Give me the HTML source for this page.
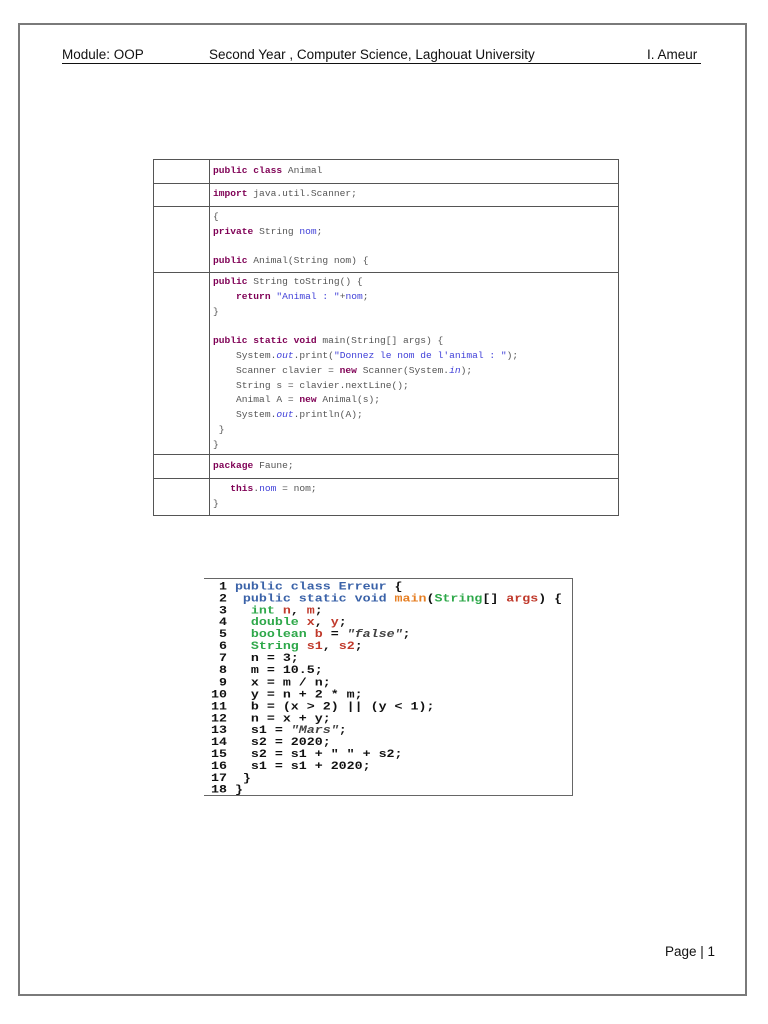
<!DOCTYPE html>
<html><head><meta charset="utf-8"><style>
body{margin:0;width:768px;height:1024px;background:#fff;position:relative;overflow:hidden;font-family:"Liberation Sans",sans-serif}
.frame{position:absolute;left:18px;top:23px;width:725px;height:969px;border:2px solid #7a7a7a}
.hdr{position:absolute;top:47px;font-size:13.5px;color:#111;white-space:nowrap}
.ul{position:absolute;left:62px;top:63px;width:639px;height:1px;background:#111}
.tline{position:absolute;left:153px;width:466px;height:1px;background:#555}
.vl{position:absolute;left:209px;top:159px;width:1px;height:357px;background:#555}
.c{position:absolute;left:213px;font-family:"Liberation Mono",monospace;font-size:9.6px;color:#555;white-space:pre;line-height:14.8px}
.k{color:#7f0055;font-weight:bold}
.b{color:#3f3fd8}
.i{color:#3f3fd8;font-style:italic}
.img{position:absolute;left:204px;top:578px;width:368px;height:216px;border-top:1px solid #666;border-right:1px solid #666;border-bottom:1px solid #666}
.code2{position:absolute;left:211px;top:581px;font-family:"Liberation Mono",monospace;font-weight:bold;font-size:13.3px;line-height:14.06px;color:#111;white-space:pre;transform:scale(1,0.85);transform-origin:0 0}
.bl{color:#3a62a8}.gr{color:#2ea84a}.rd{color:#c0392b}.or{color:#e67e22}.it{font-style:italic;color:#444}
</style></head><body>
<div class="frame"></div>
<div class="hdr" style="left:62px">Module: OOP</div>
<div class="hdr" style="left:209px">Second Year , Computer Science, Laghouat University</div>
<div class="hdr" style="left:647px">I. Ameur</div>
<div class="ul"></div>

<div class="tline" style="top:159px"></div>
<div class="tline" style="top:183px"></div>
<div class="tline" style="top:206px"></div>
<div class="tline" style="top:272px"></div>
<div class="tline" style="top:454px"></div>
<div class="tline" style="top:478px"></div>
<div class="tline" style="top:515px"></div>
<div style="position:absolute;left:153px;top:159px;width:1px;height:357px;background:#555"></div>
<div style="position:absolute;left:618px;top:159px;width:1px;height:357px;background:#555"></div>
<div class="vl"></div>

<div class="c" style="top:164px"><span class="k">public class</span> Animal</div>
<div class="c" style="top:187px"><span class="k">import</span> java.util.Scanner;</div>
<div class="c" style="top:210px">{
<span class="k">private</span> String <span class="b">nom</span>;

<span class="k">public</span> Animal(String nom) {</div>
<div class="c" style="top:275px"><span class="k">public</span> String toString() {
    <span class="k">return</span> <span class="b">"Animal : "</span>+<span class="b">nom</span>;
}

<span class="k">public static void</span> main(String[] args) {
    System.<span class="i">out</span>.print(<span class="b">"Donnez le nom de l'animal : "</span>);
    Scanner clavier = <span class="k">new</span> Scanner(System.<span class="i">in</span>);
    String s = clavier.nextLine();
    Animal A = <span class="k">new</span> Animal(s);
    System.<span class="i">out</span>.println(A);
 }
}</div>
<div class="c" style="top:459px"><span class="k">package</span> Faune;</div>
<div class="c" style="top:482px">   <span class="k">this</span>.<span class="b">nom</span> = nom;
}</div>

<div class="img"></div>
<div class="code2"> 1 <span class="bl">public class Erreur</span> {
 2  <span class="bl">public static void</span> <span class="or">main</span>(<span class="gr">String</span>[] <span class="rd">args</span>) {
 3   <span class="gr">int</span> <span class="rd">n</span>, <span class="rd">m</span>;
 4   <span class="gr">double</span> <span class="rd">x</span>, <span class="rd">y</span>;
 5   <span class="gr">boolean</span> <span class="rd">b</span> = <span class="it">"false"</span>;
 6   <span class="gr">String</span> <span class="rd">s1</span>, <span class="rd">s2</span>;
 7   n = 3;
 8   m = 10.5;
 9   x = m / n;
10   y = n + 2 * m;
11   b = (x &gt; 2) || (y &lt; 1);
12   n = x + y;
13   s1 = <span class="it">"Mars"</span>;
14   s2 = 2020;
15   s2 = s1 + " " + s2;
16   s1 = s1 + 2020;
17  }
18 }</div>

<div class="hdr" style="left:665px;top:944px">Page | 1</div>
</body></html>
